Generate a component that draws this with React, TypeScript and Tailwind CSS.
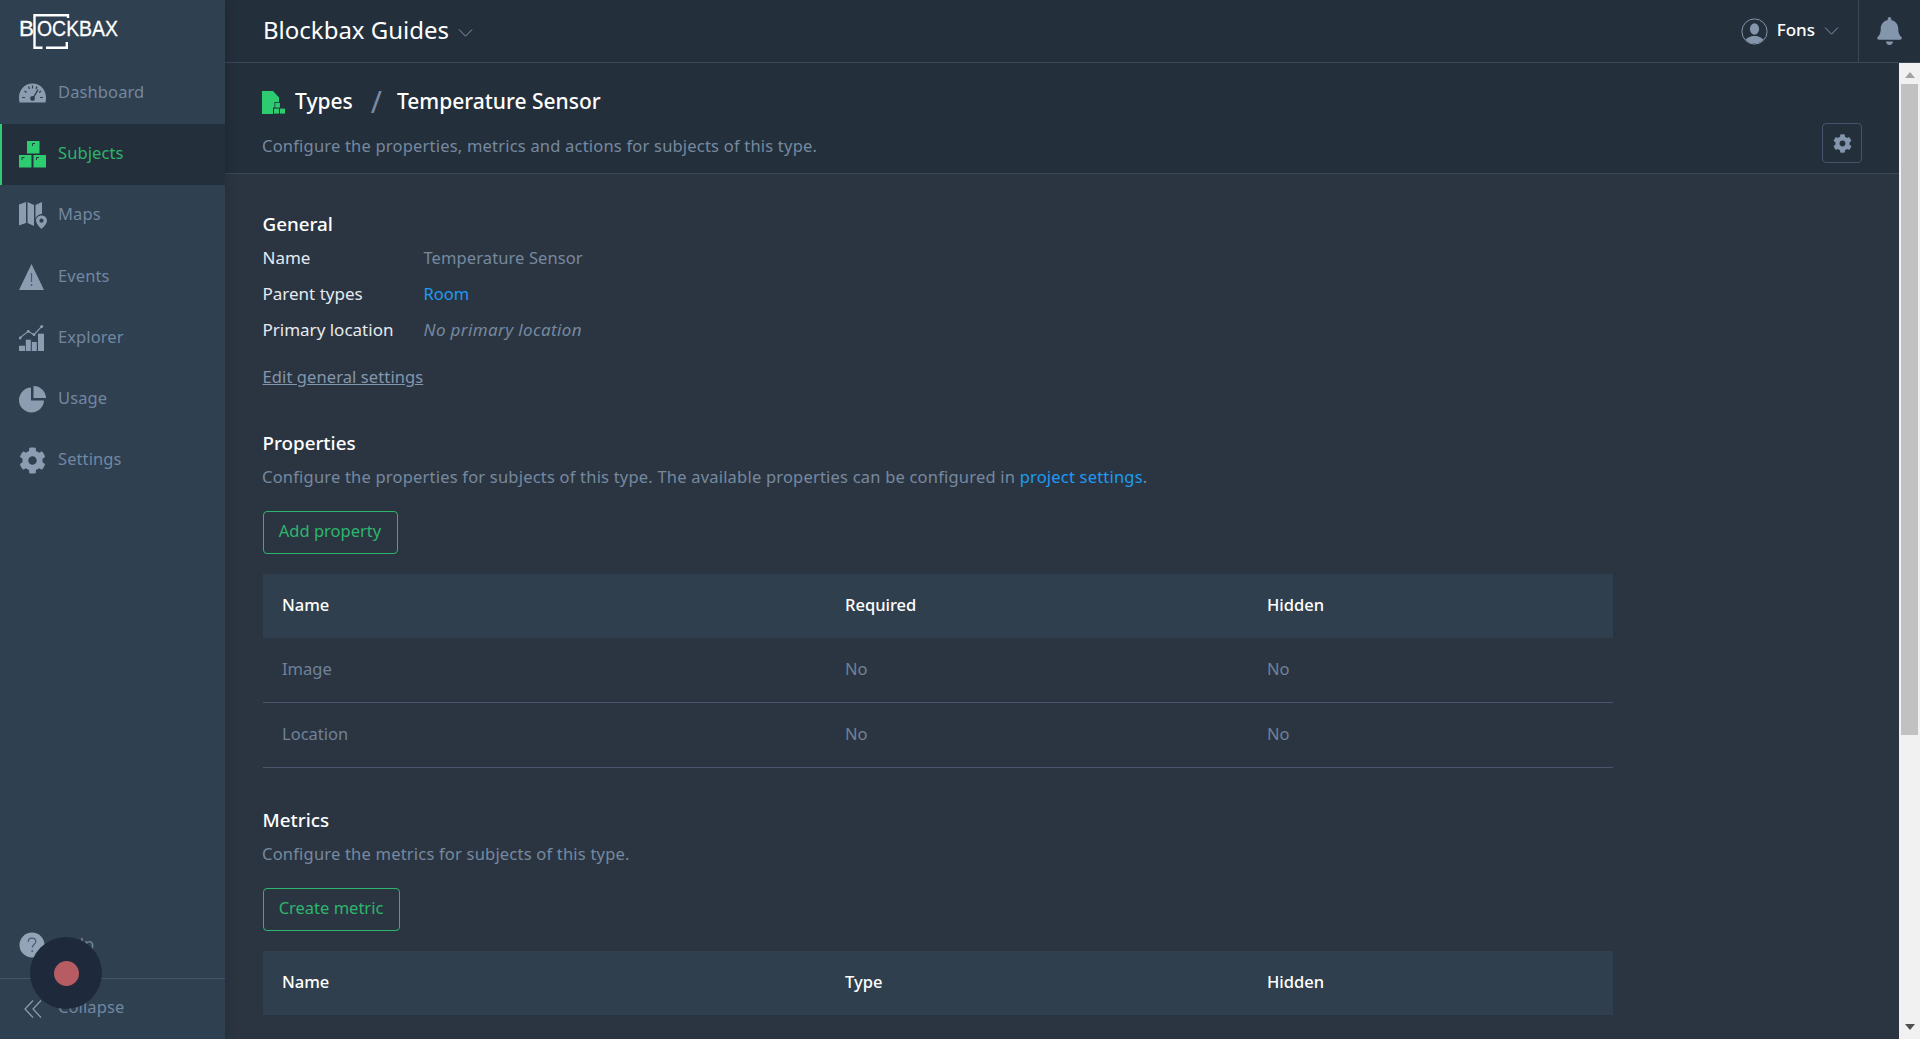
import React from "react";
import { FaCog, FaBell } from "react-icons/fa";

const Chevron = ({ className = "" }: { className?: string }) => (
  <svg viewBox="0 0 14 8" className={className} fill="none" stroke="currentColor" strokeWidth="1">
    <path d="M0.5 0.5 L7 7.2 L13.5 0.5" />
  </svg>
);

const DashboardIcon = () => (
  <svg viewBox="0 0 27 20" className="w-[27px] h-[20px]">
    <path d="M0.5 19.5 C0.5 19 0 17 0 14.5 C0 6.5 6 0.5 13.5 0.5 C21 0.5 27 6.5 27 14.5 C27 17 26.5 19 26.5 19.5 Z" fill="currentColor" />
    <g stroke="#2f4050" strokeWidth="1.2" fill="none">
      <path d="M3 14.5 H6 M5.5 8 L7.5 9.5 M9.5 3.5 L10.5 6 M13.5 2.5 V5.5 M18 3.5 L17 6 M22 8 L20 9.5 M24 14.5 H21" />
      <path d="M19 6.5 L14.5 14.5" strokeWidth="1.4" />
    </g>
    <circle cx="13.5" cy="15.5" r="2.4" fill="#2f4050" />
  </svg>
);

const SubjectsIcon = () => (
  <svg viewBox="0 0 27 27" className="w-[27px] h-[27px]">
    <rect x="8" y="0" width="12.5" height="12.5" fill="#2ecc71" />
    <rect x="0" y="14" width="12.5" height="12.5" fill="#2ecc71" />
    <rect x="14.5" y="14" width="12.5" height="12.5" fill="#2ecc71" />
    <g stroke="#242f3c" strokeWidth="0.9" fill="none">
      <path d="M13.5 5 V2.5 H16" />
      <path d="M3 19 V16.5 H5.5" />
      <path d="M17.5 19 V16.5 H20" />
    </g>
  </svg>
);

const MapsIcon = () => (
  <svg viewBox="0 0 28 27" className="w-[28px] h-[27px]" fill="currentColor">
    <path d="M0 2.5 L7 0 V21 L0 23.5 Z" />
    <path d="M8.5 0 L15 3 V24 L8.5 21 Z" />
    <path d="M16.5 3 L23 0 V12 C19.5 12 16.5 14.5 16.5 18 Z" />
    <path fillRule="evenodd" d="M22.5 13.5 C25.5 13.5 28 15.8 28 18.6 C28 21.5 24.8 25 22.5 27 C20.2 25 17 21.5 17 18.6 C17 15.8 19.5 13.5 22.5 13.5 Z M22.5 16.6 A2.1 2.1 0 1 0 22.5 20.8 A2.1 2.1 0 1 0 22.5 16.6 Z" />
  </svg>
);

const EventsIcon = () => (
  <svg viewBox="0 0 25 26" className="w-[25px] h-[26px]">
    <path d="M12.5 0 L25 26 H0 Z" fill="currentColor" />
    <path d="M12.5 9 V18" stroke="#4c5c70" strokeWidth="1.2" />
    <circle cx="12.5" cy="21" r="0.9" fill="#4c5c70" />
  </svg>
);

const UsageIcon = () => (
  <svg viewBox="0 0 27 27" className="w-[27px] h-[27px]" fill="currentColor">
    <path d="M12 1.5 V14.5 H25 A12.5 12.5 0 1 1 12 1.5 Z" />
    <path d="M14.5 0 A12.5 12.5 0 0 1 27 12 H14.5 Z" />
  </svg>
);

const HelpIcon = () => (
  <svg viewBox="0 0 26 26" className="w-[26px] h-[26px]">
    <circle cx="13" cy="13" r="12.5" fill="#93a3b8" />
    <path d="M9.2 10 C9.2 7.5 11 6.2 13 6.2 C15.2 6.2 16.8 7.6 16.8 9.6 C16.8 12.4 13.2 12.6 13.2 15.8" fill="none" stroke="#4c5c70" strokeWidth="1.2" />
    <circle cx="13.2" cy="19" r="0.9" fill="#4c5c70" />
  </svg>
);

const ExplorerIcon = () => (
  <svg viewBox="0 0 25 26" className="w-[25px] h-[26px]" fill="currentColor">
    <rect x="0" y="20.7" width="6" height="5.3" />
    <rect x="6.8" y="14.7" width="5" height="11.3" />
    <rect x="12.8" y="17" width="5" height="9" />
    <rect x="19" y="8.7" width="6" height="17.3" />
    <path d="M0.7 13 L9.3 6.3 L15 9.7 L22.7 1.3" fill="none" stroke="currentColor" strokeWidth="1.1" />
    <circle cx="1.2" cy="13" r="1.4" />
    <circle cx="9.3" cy="6.3" r="1.4" />
    <circle cx="15" cy="9.7" r="1.4" />
    <circle cx="22.7" cy="1.5" r="1.5" />
  </svg>
);

const TypesIcon = () => (
  <svg viewBox="0 0 23 23" className="w-[23px] h-[23px]" fill="#2ecc71">
    <path d="M0 0 H11 L17 6.5 V11 H12.5 V16.5 H11 V23 H0 Z" />
    <rect x="13.3" y="11.8" width="4.6" height="4.8" />
    <rect x="12" y="17.6" width="5" height="5" />
    <rect x="18" y="17.6" width="5" height="5" />
  </svg>
);

const UserIcon = () => (
  <svg viewBox="0 0 27 27" className="w-[27px] h-[27px]">
    <defs>
      <clipPath id="uc"><circle cx="13.5" cy="13.5" r="12" /></clipPath>
    </defs>
    <circle cx="13.5" cy="13.5" r="12.6" fill="#242f3c" stroke="#8496ac" strokeWidth="1" />
    <g clipPath="url(#uc)" fill="#8496ac">
      <ellipse cx="13.5" cy="11" rx="4.6" ry="5.8" />
      <path d="M3 27 C3 20 8 19.5 11 18 H16 C19 19.5 24 20 24 27 Z" />
    </g>
  </svg>
);

const Logo = () => (
  <svg viewBox="0 0 102 35" className="w-[102px] h-[35px]">
    <text x="0" y="22" fontFamily="'Liberation Sans', sans-serif" fontSize="22.5" fill="#fff" stroke="#fff" strokeWidth="0.3">B</text>
    <text x="18" y="22" fontFamily="'Liberation Sans', sans-serif" fontSize="22.5" fill="#fff" stroke="#fff" strokeWidth="0.3" textLength="81" lengthAdjust="spacingAndGlyphs">OCKBAX</text>
    <path d="M15.5 35 V1.2 H49 V4 M15.5 33.8 H23.5 M27 33.8 H49 M47.8 35 V28" fill="none" stroke="#fff" strokeWidth="2.4" />
  </svg>
);

const NavItem = ({ icon, label, active = false }: { icon: React.ReactNode; label: string; active?: boolean }) => (
  <div className={active
    ? "h-[61.2px] flex items-center border-l-2 border-[#2ecc71] bg-[#242f3c] text-[#2db56c]"
    : "h-[61.2px] flex items-center pl-[2px] text-[#7287a0]"}>
    <div className={active ? "w-[56px] pl-[17px] flex items-center text-[#2ecc71]" : "w-[56px] pl-[17px] flex items-center text-[#8c9db2]"}>{icon}</div>
    <span className="text-[16.5px] -mt-[2px] tracking-[0.1px]">{label}</span>
  </div>
);

const SectionTitle = ({ children }: { children: React.ReactNode }) => (
  <div className="h-[24px] leading-[24px] text-[18.8px] font-medium text-white -ml-[0.5px]">{children}</div>
);

const Button = ({ children, w }: { children: React.ReactNode; w: string }) => (
  <div className={`${w} mt-[22px] h-[43px] pb-[2px] pr-[1px] flex items-center justify-center rounded-[4px] border border-[#2db56c] text-[#2db56c] text-[16.5px]`}>{children}</div>
);

const DefRow = ({ label, children }: { label: string; children: React.ReactNode }) => (
  <div className="h-[36px] flex items-center -ml-[0.5px]">
    <div className="w-[161px] text-[#e6eaef] text-[17px]">{label}</div>
    {children}
  </div>
);

const Row = ({ a, b, c }: { a: string; b: string; c: string }) => (
  <div className="h-[65px] pb-[2px] grid grid-cols-[563px_422px_1fr] items-center pl-[19px] border-b border-[#47566a] text-[#6f8299] text-[16.5px]">
    <div>{a}</div>
    <div>{b}</div>
    <div>{c}</div>
  </div>
);

const HeadRow = ({ a, b, c }: { a: string; b: string; c: string }) => (
  <div className="h-[64px] pb-[2px] grid grid-cols-[563px_422px_1fr] items-center pl-[19px] bg-[#2f3f4e] text-white text-[16.5px] font-medium">
    <div>{a}</div>
    <div>{b}</div>
    <div>{c}</div>
  </div>
);

export default function App() {
  return (
    <div className="relative flex h-[1039px] w-[1920px] overflow-hidden bg-[#2b3542] font-['Noto_Sans',sans-serif]">
      <aside className="w-[225px] shrink-0 flex flex-col bg-[#2f4050] shadow-[2px_0_10px_rgba(0,0,0,0.15)] z-10">
        <div className="h-[62.8px] pl-[19px] pt-[14px]"><Logo /></div>
        <NavItem label="Dashboard" icon={<DashboardIcon />} />
        <NavItem active label="Subjects" icon={<SubjectsIcon />} />
        <NavItem label="Maps" icon={<MapsIcon />} />
        <NavItem label="Events" icon={<EventsIcon />} />
        <NavItem label="Explorer" icon={<ExplorerIcon />} />
        <NavItem label="Usage" icon={<UsageIcon />} />
        <NavItem label="Settings" icon={<FaCog className="w-[27px] h-[27px]" />} />
        <div className="mt-auto">
          <div className="pb-[2px]"><NavItem label="Help" icon={<HelpIcon />} /></div>
          <div className="h-[61px] border-t border-[#44576a] flex items-center pl-[2px] text-[#7287a0]">
            <div className="w-[56px] pl-[22px]">
              <svg viewBox="0 0 18 18" className="w-[18px] h-[18px] text-[#8c9db2]" fill="none" stroke="currentColor" strokeWidth="1.2">
                <path d="M9 0.5 L1 9 L9 17.5 M17 0.5 L9 9 L17 17.5" />
              </svg>
            </div>
            <span className="text-[16.5px] -mt-[3px] tracking-[0.1px]">Collapse</span>
          </div>
        </div>
      </aside>

      <div className="flex-1 flex flex-col min-w-0">
        <header className="h-[63px] shrink-0 flex items-center bg-[#242f3c] border-b border-[#3a4858]">
          <div className="pl-[38px] -mt-[3px] text-[24px] text-white">Blockbax Guides</div>
          <Chevron className="ml-[9px] mt-[3px] w-[15px] h-[8px] text-[#8496ac]" />
          <div className="ml-auto flex items-center h-full">
            <UserIcon />
            <span className="ml-[9px] -mt-[3px] text-[17px] text-white font-medium">Fons</span>
            <Chevron className="ml-[9px] w-[15px] h-[8px] text-[#8496ac]" />
            <div className="ml-[19px] h-full w-[62px] border-l border-[#3a4858] flex items-center pl-[17px]">
              <FaBell className="w-[27px] h-[28px] text-[#8496ac]" />
            </div>
          </div>
        </header>

        <div className="flex-1 flex min-h-0">
          <main className="flex-1 min-w-0 overflow-hidden">
            <div className="h-[111px] bg-[#242f3c] border-b border-[#3a4858] flex justify-between pl-[37px] pr-[37px]">
              <div className="pt-[23px]">
                <div className="h-[32px] flex items-center text-white text-[21px] font-medium">
                  <TypesIcon />
                  <span className="ml-[10px]">Types</span>
                  <span className="ml-[18px] text-[#7a8ca3] text-[30px] font-normal leading-[32px]">/</span>
                  <span className="ml-[15px]">Temperature Sensor</span>
                </div>
                <div className="mt-[16px] h-[24px] leading-[24px] text-[16.5px] tracking-[0.2px] text-[#76899f]">Configure the properties, metrics and actions for subjects of this type.</div>
              </div>
              <div className="self-end mb-[10px] w-[40px] h-[40px] rounded-[4px] border border-[#44556a] flex items-center justify-center">
                <FaCog className="w-[19px] h-[19px] text-[#8496ac]" />
              </div>
            </div>

            <div className="pl-[38px] pr-[286px] pt-[38px]">
              <SectionTitle>General</SectionTitle>
              <div className="mt-[4px]">
                <DefRow label="Name"><span className="text-[#76899f] text-[16.5px] tracking-[0.1px]">Temperature Sensor</span></DefRow>
                <DefRow label="Parent types"><span className="text-[#1e9bf0] text-[16.5px]">Room</span></DefRow>
                <DefRow label="Primary location"><span className="italic text-[#76899f] text-[17px] tracking-[0.37px]">No primary location</span></DefRow>
              </div>
              <div className="mt-[17px] -ml-[0.5px] h-[24px] leading-[24px] text-[16.5px] tracking-[0.1px] text-[#8496ac] underline">Edit general settings</div>

              <div className="mt-[42px]"><SectionTitle>Properties</SectionTitle></div>
              <div className="mt-[10px] -ml-[1px] h-[24px] leading-[24px] text-[16.5px] tracking-[0.2px] text-[#76899f]">
                Configure the properties for subjects of this type. The available properties can be configured in <span className="text-[#1e9bf0]">project settings</span>.
              </div>
              <Button w="w-[135px]">Add property</Button>
              <div className="mt-[20px]">
                <HeadRow a="Name" b="Required" c="Hidden" />
                <Row a="Image" b="No" c="No" />
                <Row a="Location" b="No" c="No" />
              </div>

              <div className="mt-[40px]"><SectionTitle>Metrics</SectionTitle></div>
              <div className="mt-[10px] -ml-[1px] h-[24px] leading-[24px] text-[16.5px] tracking-[0.2px] text-[#76899f]">Configure the metrics for subjects of this type.</div>
              <Button w="w-[137px]">Create metric</Button>
              <div className="mt-[20px]">
                <HeadRow a="Name" b="Type" c="Hidden" />
              </div>
            </div>
          </main>

          <div className="w-[21px] shrink-0 bg-[#f1f1f1] flex flex-col items-center">
            <svg viewBox="0 0 10 6" className="mt-[9px] w-[10px] h-[6px] fill-[#a3a3a3]"><path d="M5 0 L10 6 H0 Z" /></svg>
            <div className="mt-[6px] w-[17px] h-[651px] bg-[#c1c1c1]" />
            <svg viewBox="0 0 10 6" className="mt-auto mb-[9px] w-[10px] h-[6px] fill-[#505050]"><path d="M0 0 H10 L5 6 Z" /></svg>
          </div>
        </div>
      </div>

      <div className="absolute z-20 left-[30px] top-[937px] w-[72px] h-[72px] rounded-full bg-[#1e2a3c] flex items-center justify-center">
        <div className="w-[25px] h-[25px] rounded-full bg-[#b65c62]" />
      </div>
    </div>
  );
}
